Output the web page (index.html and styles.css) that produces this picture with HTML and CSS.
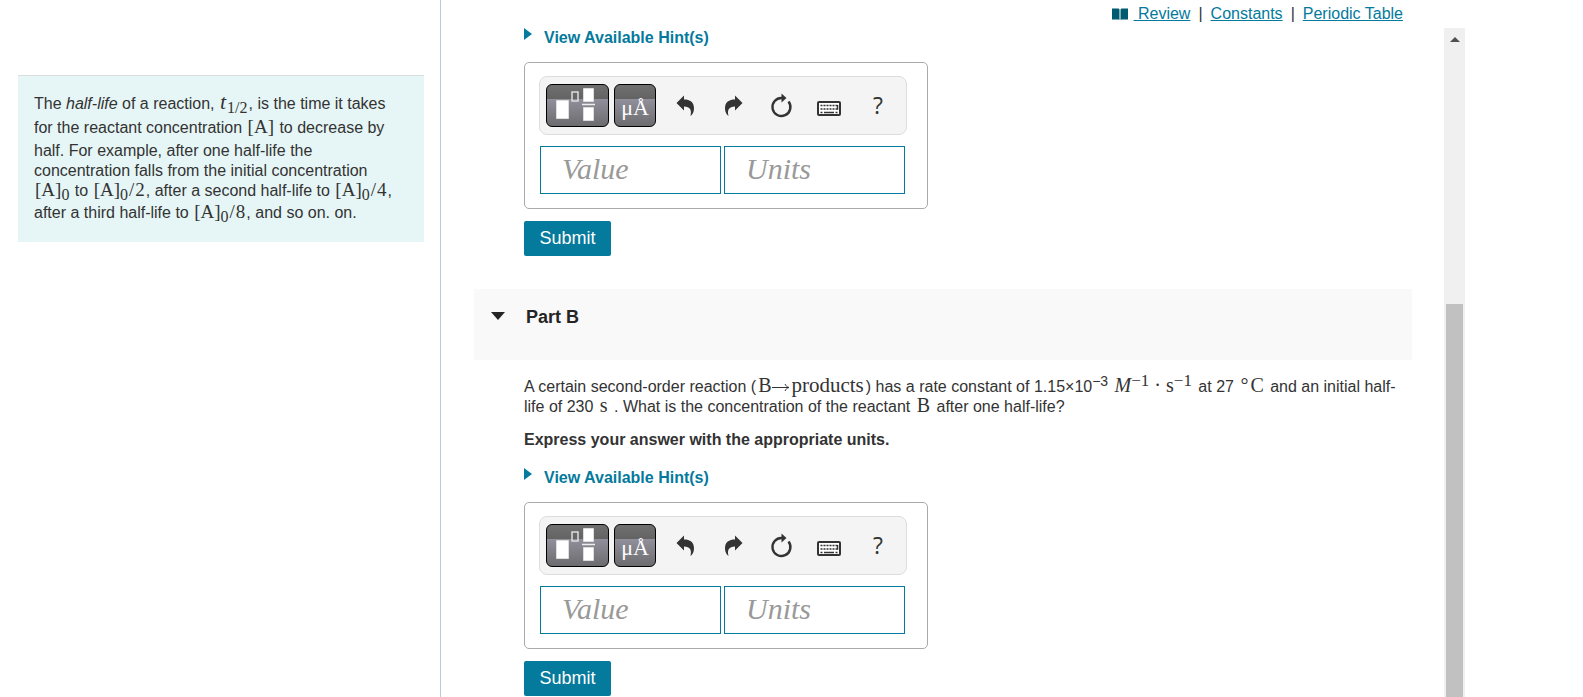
FILE: index.html
```html
<!DOCTYPE html>
<html lang="en">
<head>
  <meta charset="UTF-8">
  <meta name="viewport" content="width=device-width, initial-scale=1">
  <title>Half-life of a reaction</title>
  <link rel="stylesheet" href="styles.css">
</head>
<body>
<svg class="sprite" aria-hidden="true">
  <symbol id="icon-template" viewBox="0 0 61 41">
    <path fill="#fff" stroke="#ddd" d="M9.500 15.500h12v18h-12zM36.500 3.500h10v13h-10zM36.500 22.500h10v13h-10z"/>
    <path fill="none" stroke="#ddd" stroke-width="1.500" d="M25 7h6v9h-6z"/>
    <path fill="none" stroke="#eee" stroke-width="1.500" d="M35 19.500h13"/>
  </symbol>
  <symbol id="icon-undo" viewBox="0 0 48 43">
    <path d="M14.500 19 22 11.500v4c6 0 10 2.500 10 9 0 3.500-1.500 6-3.500 7.500C30 26 28 22.500 22 22.500v4z"/>
  </symbol>
  <symbol id="icon-redo" viewBox="0 0 48 43">
    <path d="M32.500 19 25 11.500v4c-6 0-10 2.500-10 9 0 3.500 1.500 6 3.500 7.500C17 26 19 22.500 25 22.500v4z"/>
  </symbol>
  <symbol id="icon-reset" viewBox="0 0 48 43">
    <path fill="none" stroke="#333" stroke-width="2.400" d="M30.500 17.400A9 9 0 1 1 24 14"/>
    <path d="M23.500 9.500 28.500 14l-5 4.500z"/>
  </symbol>
  <symbol id="icon-keyboard" viewBox="0 0 48 43">
    <rect x="12" y="18" width="22" height="13" rx="1" fill="#fff" stroke="#333" stroke-width="2"/>
    <path fill="none" stroke="#333" stroke-width="1.500" stroke-dasharray="2 1" d="M14.500 21.500h17M14.500 25h17"/>
    <path fill="none" stroke="#333" stroke-width="1.500" d="M14.500 28.500h2M18 28.500h10M29.500 28.500h2M31.500 21v4.700"/>
  </symbol>
</svg>

<aside class="sidebar">
  <p class="intro">
    The <i>half-life</i> of a reaction, <span class="math math-deep"><i>t</i><sub>1/2</sub></span>, is the time it takes<br>
    for the reactant concentration <span class="math math-mid">[A]</span> to decrease by<br>
    half. For example, after one half-life the<br>
    concentration falls from the initial concentration<br>
    <span class="math">[A]<sub>0</sub></span> to <span class="math">[A]<sub>0</sub><span class="slash">/</span>2</span>, after a second half-life to <span class="math">[A]<sub>0</sub><span class="slash">/</span>4</span>,<br>
    after a third half-life to <span class="math">[A]<sub>0</sub><span class="slash">/</span>8</span>, and so on. on.
  </p>
</aside>

<main class="main">
  <nav class="links">
    <svg class="book" viewBox="0 0 16 13" aria-hidden="true">
      <path d="M0 .500h6.500l1 1V12l-1-.500H0zM16 .500H9.500l-1 1V12l1-.500H16z"/>
    </svg>
    <a href="#">&nbsp;Review</a><span class="sep">|</span><a href="#">Constants</a><span class="sep">|</span><a href="#">Periodic Table</a>
  </nav>

  <div class="viewport">
    <div class="content">
      <section class="part">
        <a class="hint" href="#">View Available Hint(s)</a>
        <div class="answer">
          <div class="toolbar">
            <button class="tool tool-wide" aria-label="Templates"><svg><use href="#icon-template"/></svg></button>
            <button class="tool" aria-label="Symbols">μÅ</button>
            <div class="actions">
              <button class="action" aria-label="Undo"><svg><use href="#icon-undo"/></svg></button>
              <button class="action" aria-label="Redo"><svg><use href="#icon-redo"/></svg></button>
              <button class="action" aria-label="Reset"><svg><use href="#icon-reset"/></svg></button>
              <button class="action" aria-label="Keyboard shortcuts"><svg><use href="#icon-keyboard"/></svg></button>
              <button class="action">?</button>
            </div>
          </div>
          <div class="fields">
            <input type="text" placeholder="Value" aria-label="Value">
            <input type="text" placeholder="Units" aria-label="Units">
          </div>
        </div>
        <button class="submit">Submit</button>
      </section>

      <h2 class="part-title">Part B</h2>

      <section class="part">
        <p class="question">
          A certain second-order reaction (<span class="tex">B<svg class="arrow" viewBox="0 0 18 9" aria-hidden="true"><path d="M0 4.500h17M13 1c1 2 2 3 4 3.500-2 .5-3 1.500-4 3.500"/></svg><span class="tex-word">products</span></span>) has a rate constant of 1.15×10<sup>−3</sup> <span class="tex"><i>M</i><sup>−1</sup> · s<sup>−1</sup></span> at 27 <span class="tex"><span class="degree">°</span>C</span> and an initial half-<br>
          life of 230 <span class="tex">s</span> . What is the concentration of the reactant <span class="tex">B</span> after one half-life?
        </p>
        <p class="express">Express your answer with the appropriate units.</p>
        <a class="hint" href="#">View Available Hint(s)</a>
        <div class="answer">
          <div class="toolbar">
            <button class="tool tool-wide" aria-label="Templates"><svg><use href="#icon-template"/></svg></button>
            <button class="tool" aria-label="Symbols">μÅ</button>
            <div class="actions">
              <button class="action" aria-label="Undo"><svg><use href="#icon-undo"/></svg></button>
              <button class="action" aria-label="Redo"><svg><use href="#icon-redo"/></svg></button>
              <button class="action" aria-label="Reset"><svg><use href="#icon-reset"/></svg></button>
              <button class="action" aria-label="Keyboard shortcuts"><svg><use href="#icon-keyboard"/></svg></button>
              <button class="action">?</button>
            </div>
          </div>
          <div class="fields">
            <input type="text" placeholder="Value" aria-label="Value">
            <input type="text" placeholder="Units" aria-label="Units">
          </div>
        </div>
        <button class="submit">Submit</button>
      </section>
    </div>

    <div class="scrollbar">
      <div class="scroll-up"></div>
      <div class="thumb"></div>
    </div>
  </div>
</main>
</body>
</html>
```
FILE: styles.css
```css
* {
  box-sizing: border-box;
}

body {
  display: flex;
  height: 100vh;
  margin: 0;
  overflow: hidden;

  font: 16px/20px "Liberation Sans", Arial, sans-serif;
  color: #333;
  background: #fff;
}

p,
h2 {
  margin: 0;
}

button,
input {
  margin: 0;
  padding: 0;
  font-family: inherit;
}

a {
  color: #047a9c;
}

.sprite {
  position: absolute;
  width: 0;
  height: 0;
}

/* left column */

.sidebar {
  flex: 0 0 441px;
  padding: 75px 16px 0 18px;
  border-right: 1px solid #b7cadb;
}

.intro {
  padding: 18px 16px 17px;
  background: #e6f6f6;
  border-top: 1px solid #d9dfdf;
}

.math {
  display: inline-block;
  margin: 0 1px;
  padding-bottom: 4px;
  font: 19px/18px "Liberation Serif", "Times New Roman", serif;
}

.math-mid {
  padding-bottom: 5px;
}

.math-deep {
  padding-bottom: 6px;
}

.math-deep i {
  margin-right: 1px;
  font-size: 22px;
  line-height: 0;
}

sub,
sup {
  font-size: 14px;
  line-height: 0;
}

sub {
  vertical-align: -4px;
}

sup {
  vertical-align: 6px;
}

.math sub {
  font-size: 16px;
}

.slash {
  margin: 0 1px;
}

/* right column */

.main {
  flex: 1;
  display: flex;
  flex-direction: column;
  min-width: 0;
  margin-right: 118px;
}

.links {
  display: flex;
  flex: 0 0 28px;
  align-items: center;
  justify-content: flex-end;
  padding-right: 62px;
}

.book {
  width: 16px;
  height: 13px;
  margin-right: 6px;
  fill: #005a70;
}

.sep {
  margin: 0 8px;
}

.viewport {
  flex: 1;
  display: flex;
  min-height: 0;
}

.content {
  flex: 1;
  min-width: 0;
  padding: 0 32px 0 33px;
}

.part {
  display: flex;
  flex-direction: column;
  align-items: flex-start;
  padding-left: 50px;
}

.hint {
  display: flex;
  gap: 12px;
  font-weight: bold;
  text-decoration: none;
}

.hint::before {
  content: "";
  height: 0;
  border: solid transparent;
  border-width: 6px 0 6px 8px;
  border-left-color: #047a9c;
}

.answer {
  margin: 14px 0 12px;
  padding: 13px 20px 14px 14px;
  border: 1px solid #aaa;
  border-radius: 5px;
}

.toolbar {
  display: flex;
  gap: 5px;
  padding: 7px 4px 7px 6px;
  background: #f4f4f4;
  border: 1px solid #ddd;
  border-radius: 8px;
}

.tool {
  width: 42px;
  height: 43px;
  padding-top: 5px;
  font: 22px "Liberation Serif", "Times New Roman", serif;
  color: #fff;
  background: linear-gradient(#707070, #636363 14px, #91909b 14px, #6c6c6f);
  border: 1px solid #000;
  border-radius: 6px;
}

.tool-wide {
  width: 63px;
  padding: 0;
}

.tool svg {
  display: block;
  width: 61px;
  height: 41px;
}

.actions {
  display: flex;
  margin-left: 1px;
}

.action {
  width: 48px;
  height: 43px;
  padding-bottom: 2px;
  font: 23px "Open Sans", sans-serif;
  color: #333;
  background: none;
  border: 0;
}

.action svg {
  display: block;
  width: 48px;
  height: 43px;
  margin-bottom: -2px;
  fill: #333;
}

.fields {
  display: flex;
  gap: 3px;
  margin-top: 11px;
  margin-left: 1px;
}

.fields input {
  width: 181px;
  height: 48px;
  padding: 0 21px 2px;
  font: italic 30px "Liberation Serif", "Times New Roman", serif;
  border: 1px solid #047a9c;
}

.fields input::placeholder {
  color: #999;
}

.submit {
  width: 87px;
  height: 35px;
  font-size: 18px;
  color: #fff;
  background: #047a9c;
  border: 0;
  border-radius: 2px;
}

.part-title {
  display: flex;
  gap: 21px;
  height: 71px;
  margin: 33px 0 17px;
  padding: 18px 17px;
  font-size: 18px;
  color: #252525;
  background: #f9f9f9;
}

.part-title::before {
  content: "";
  height: 0;
  margin-top: 5px;
  border: solid transparent;
  border-width: 8px 7px 0;
  border-top-color: #252525;
}

.tex {
  margin: 0 2px;
  font: 20px/0 "Liberation Serif", "Times New Roman", serif;
}

.tex-word {
  font-size: 21px;
}

.tex sup {
  font-size: 17px;
}

.degree {
  margin-right: 2px;
}

.arrow {
  width: 18px;
  height: 9px;
  margin: 0 1px;
  fill: none;
  stroke: #333;
}

.express {
  margin: 13px 0 18px;
  font-weight: bold;
}

.scrollbar {
  flex: 0 0 21px;
  display: flex;
  flex-direction: column;
  padding: 0 2px;
  background: #f0f0f0;
}

.scroll-up {
  align-self: center;
  margin: 9px 0 262px;
  border: solid transparent;
  border-width: 0 5px 5px;
  border-bottom-color: #505050;
}

.thumb {
  flex: 1;
  background: #c1c1c1;
}
```
